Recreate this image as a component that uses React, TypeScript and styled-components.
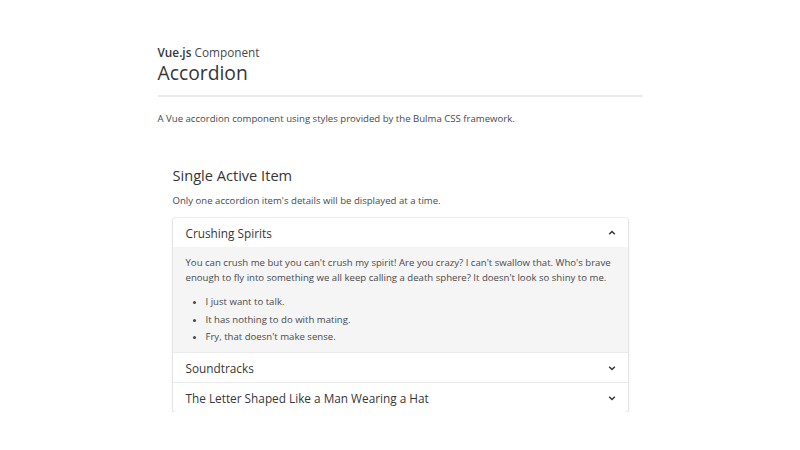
import React from 'react';
import styled, { createGlobalStyle } from 'styled-components';

const Global = createGlobalStyle`
  html, body { margin: 0; padding: 0; background: #fff; }
  body { font-family: "Open Sans", "Noto Sans", sans-serif; color: #4a4a4a; }
`;

const Page = styled.div`
  width: 485px;
  margin: 0 auto;
  padding-top: 44px;
`;

const Subtitle = styled.div`
  font-size: 11.8px;
  line-height: 16px;
  color: #4a4a4a;
  strong { font-weight: 600; color: #363636; }
`;

const Title = styled.h1`
  margin: 0;
  font-size: 19.3px;
  font-weight: 400;
  line-height: 26px;
  color: #363636;
`;

const Rule = styled.hr`
  border: none;
  height: 2px;
  background: #ebebeb;
  margin: 9px 0 15px;
`;

const Lead = styled.p`
  margin: 0;
  font-size: 9.6px;
  line-height: 14px;
`;

const Section = styled.section`
  padding: 40px 15px 0;
`;

const SectionTitle = styled.h2`
  margin: 0;
  font-size: 14.6px;
  font-weight: 400;
  line-height: 18px;
  color: #363636;
`;

const SectionText = styled.p`
  margin: 10px 0 10px;
  font-size: 9.6px;
  line-height: 14px;
`;

const Card = styled.div`
  background: #fff;
  border-radius: 3px;
  box-shadow: 0 1px 3px rgba(10, 10, 10, 0.15), 0 0 0 1px rgba(10, 10, 10, 0.06);
  overflow: hidden;
`;

const Item = styled.div<{ $last?: boolean }>`
  border-bottom: ${p => (p.$last ? 'none' : '1px solid #ebebeb')};
`;

const Header = styled.div`
  height: 29px;
  display: flex;
  align-items: center;
  justify-content: space-between;
  padding: 0 12px 0 13px;
  font-size: 11.8px;
  color: #363636;
`;

const Body = styled.div`
  background: #f5f5f5;
  padding: 7.5px 13px 6.5px;
  font-size: 9.6px;
  line-height: 15px;
  p { margin: 0 0 8.5px; }
  ul { margin: 0; padding-left: 20px; }
  li { line-height: 17.5px; }
`;

const Chevron = ({ up }: { up?: boolean }) => (
  <svg width="8" height="6" viewBox="0 0 8 6">
    <path
      d={up ? 'M1.2 4.3 L4 1.5 L6.8 4.3' : 'M1.2 1.7 L4 4.5 L6.8 1.7'}
      fill="none"
      stroke="#363636"
      strokeWidth="1.5"
    />
  </svg>
);

const items = [
  { title: 'Crushing Spirits', open: true },
  { title: 'Soundtracks', open: false },
  { title: 'The Letter Shaped Like a Man Wearing a Hat', open: false },
];

export default function App() {
  return (
    <>
      <Global />
      <Page>
        <Subtitle>
          <strong>Vue.js</strong> Component
        </Subtitle>
        <Title>Accordion</Title>
        <Rule />
        <Lead>A Vue accordion component using styles provided by the Bulma CSS framework.</Lead>
        <Section>
          <SectionTitle>Single Active Item</SectionTitle>
          <SectionText>Only one accordion item's details will be displayed at a time.</SectionText>
          <Card>
            {items.map((it, i) => (
              <Item key={it.title} $last={i === items.length - 1}>
                <Header>
                  {it.title}
                  <Chevron up={it.open} />
                </Header>
                {it.open && (
                  <Body>
                    <p>
                      You can crush me but you can't crush my spirit! Are you crazy? I can't swallow
                      that. Who's brave enough to fly into something we all keep calling a death
                      sphere? It doesn't look so shiny to me.
                    </p>
                    <ul>
                      <li>I just want to talk.</li>
                      <li>It has nothing to do with mating.</li>
                      <li>Fry, that doesn't make sense.</li>
                    </ul>
                  </Body>
                )}
              </Item>
            ))}
          </Card>
        </Section>
      </Page>
    </>
  );
}
